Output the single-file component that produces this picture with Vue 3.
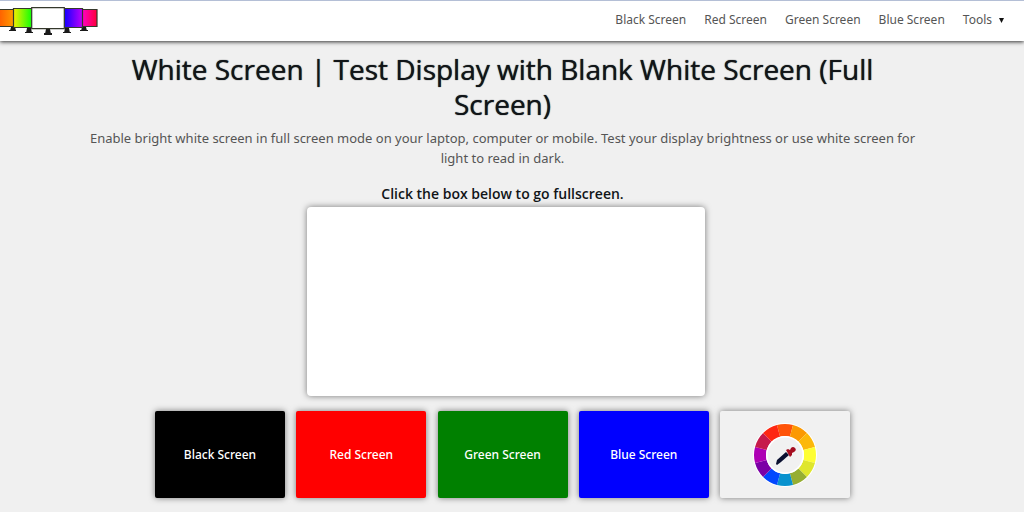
<script setup>
const links = ['Black Screen', 'Red Screen', 'Green Screen', 'Blue Screen']
const tiles = [
  { label: 'Black Screen', name: 'black' },
  { label: 'Red Screen', name: 'red' },
  { label: 'Green Screen', name: 'green' },
  { label: 'Blue Screen', name: 'blue' },
]
const wheelColours = [
  '#ff5308', '#fb9902', '#fcb80a', '#fefe33', '#dfe62c', '#96ae32',
  '#0892ce', '#0247fe', '#7c00a6', '#ae00b4', '#c61a4b', '#fe2712',
]
function point(radius, degrees) {
  const a = (degrees * Math.PI) / 180
  return `${(radius * Math.sin(a)).toFixed(2)} ${(-radius * Math.cos(a)).toFixed(2)}`
}
const segments = wheelColours.map((fill, i) => {
  const from = i * 30 - 15
  const to = from + 30
  return {
    fill,
    d: `M${point(31, from)}A31 31 0 0 1 ${point(31, to)}L${point(19, to)}A19 19 0 0 0 ${point(19, from)}Z`,
  }
})
</script>

<template>
  <div class="page">
    <header class="bar">
      <a class="logo" href="#" aria-label="Home">
        <svg width="98" height="36" viewBox="0 0 98 36" aria-hidden="true">
          <defs>
            <linearGradient id="warm"><stop offset="0" stop-color="#ff5a00" /><stop offset="1" stop-color="#ff9d00" /></linearGradient>
            <linearGradient id="lime"><stop offset="0" stop-color="#f4f000" /><stop offset="1" stop-color="#08ff08" /></linearGradient>
            <linearGradient id="violet"><stop offset="0" stop-color="#1000ff" /><stop offset="1" stop-color="#bd00fa" /></linearGradient>
            <linearGradient id="pink"><stop offset="0" stop-color="#ff00c8" /><stop offset="1" stop-color="#ff0038" /></linearGradient>
          </defs>
          <g fill="#1a1a1a">
            <path d="M11 27h4l1 4h-6zM27 28h4l1 5h-6zM46 29h4l1 5h-6zM65 28h4l1 5h-6zM82 27h4l1 4h-6z" />
            <path d="M9 30h7v1H9zM25 32h8v1h-8zM44 33h8v2h-8zM63 32h8v1h-8zM80 30h8v1h-8z" />
          </g>
          <g stroke="#35382c" stroke-width="1.2">
            <path d="M-2 9.5h16v17H-2z" fill="url(#warm)" />
            <path d="M82 9.5h15v17H82z" fill="url(#pink)" />
            <path d="M13.5 8.5h19v19h-19z" fill="url(#lime)" />
            <path d="M64 8.5h18.500v19H64z" fill="url(#violet)" />
            <path d="M31.700 7.700h32.600v21H31.700z" fill="#fff" />
          </g>
        </svg>
      </a>
      <nav class="menu" aria-label="Main">
        <a v-for="link in links" :key="link" href="#">{{ link }}</a>
        <button type="button" class="tools">
          Tools
          <svg width="5" height="5" viewBox="0 0 5 5" aria-hidden="true"><path d="M0 0h5L2.500 5z" fill="#111" /></svg>
        </button>
      </nav>
    </header>

    <main class="content">
      <h1>White Screen | Test Display with Blank White Screen (Full Screen)</h1>
      <p class="lead">
        Enable bright white screen in full screen mode on your laptop, computer or mobile. Test your display brightness or use white screen for light to read in dark.
      </p>
      <p id="hint" class="hint">Click the box below to go fullscreen.</p>
      <button type="button" class="screen" aria-labelledby="hint"></button>
      <div class="tiles">
        <button v-for="tile in tiles" :key="tile.name" type="button" class="tile" :class="tile.name">
          {{ tile.label }}
        </button>
        <button type="button" class="tile picker" aria-label="Colour picker">
          <svg width="64" height="64" viewBox="-32 -32 64 64" aria-hidden="true">
            <circle r="32" fill="#fff" />
            <path v-for="s in segments" :key="s.fill" :d="s.d" :fill="s.fill" />
            <circle r="19" fill="#fff" />
            <circle r="17.500" fill="#f1f1f1" />
            <path d="M-9 9l1-4L1-3l3 3L-4 7l-4 3z" fill="#0a1030" />
            <path d="M1-5l2-1 2 1 1-2q2-2 4 0t-1 4l-2 1v2l-2 2z" fill="#a50d20" />
          </svg>
        </button>
      </div>
    </main>
  </div>
</template>

<style>
body {
  margin: 0;
  background: #f0f0f0;
}
</style>

<style scoped>
.page {
  font-family: "Noto Sans", "Open Sans", sans-serif;
  color: #111518;
}
.bar {
  display: flex;
  justify-content: space-between;
  align-items: flex-start;
  box-sizing: border-box;
  height: 41px;
  padding-right: 20px;
  border-top: 1px solid #b4bfd6;
  background: #fff;
  box-shadow: 0 1px 4px rgba(0, 0, 0, 0.8);
}
.logo {
  display: block;
  height: 36px;
  margin-top: -1px;
}
.logo svg {
  display: block;
}
.menu {
  display: flex;
  gap: 18px;
  padding-top: 9px;
}
.menu a,
.tools {
  font-family: inherit;
  font-size: 12px;
  line-height: 20px;
  color: #555;
  text-decoration: none;
}
.tools {
  display: flex;
  align-items: center;
  gap: 7px;
  padding: 0;
  border: 0;
  background: none;
}
.content {
  display: flex;
  flex-direction: column;
  align-items: center;
  padding: 11px 99px 14px 80px;
  text-align: center;
}
h1 {
  max-width: 800px;
  margin: 0;
  font-family: "Open Sans", "Noto Sans", sans-serif;
  font-size: 28px;
  font-weight: 500;
  line-height: 35px;
  text-shadow: 0 0 1px #111518;
}
.lead {
  margin: 6px 0 0;
  font-size: 13px;
  line-height: 20px;
  color: #555;
}
.hint {
  margin: 16px 0 0;
  font-family: "Open Sans", "Noto Sans", sans-serif;
  font-size: 14px;
  font-weight: 600;
  line-height: 20px;
}
.screen {
  width: 398px;
  height: 189px;
  margin: 3px 0 0 7px;
  padding: 0;
  border: 0;
  border-radius: 4px;
  background: #fff;
  box-shadow: 0 0 6px rgba(0, 0, 0, 0.5);
}
.tiles {
  display: flex;
  justify-content: space-between;
  width: 100%;
  max-width: 695px;
  margin-top: 15px;
}
.tile {
  display: flex;
  align-items: center;
  justify-content: center;
  width: 130px;
  height: 87px;
  padding: 0;
  border: 0;
  border-radius: 2px;
  font-family: inherit;
  font-size: 12px;
  font-weight: 500;
  color: #fff;
  box-shadow: 0 0 6px rgba(0, 0, 0, 0.5);
}
.black {
  background: #000;
}
.red {
  background: #f00;
}
.green {
  background: #008000;
}
.blue {
  background: #00f;
}
.picker {
  background: #f1f1f1;
}
</style>
